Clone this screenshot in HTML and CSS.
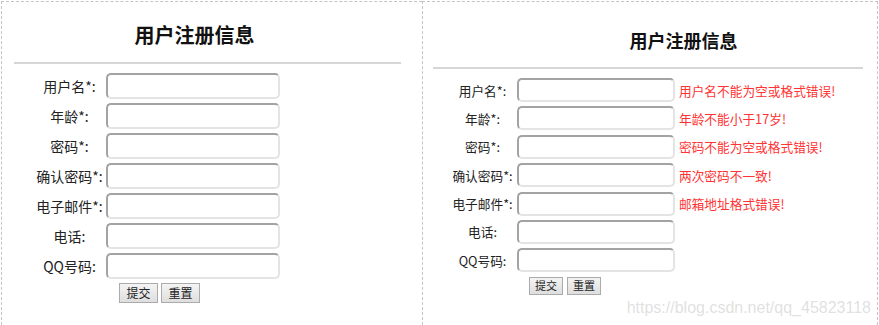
FILE: index.html
```html
<!DOCTYPE html>
<html lang="zh-CN">
<head>
<meta charset="utf-8">
<title>用户注册信息</title>
<link rel="stylesheet" href="styles.css">
</head>
<body>
<div class="wrap">
  <section class="panel panel-left">
    <h2 class="title">用户注册信息</h2>
    <hr class="rule">
    <form class="form">
      <label class="lbl">用户名*:</label><input class="field" type="text">
      <label class="lbl">年龄*:</label><input class="field" type="text">
      <label class="lbl">密码*:</label><input class="field" type="password">
      <label class="lbl">确认密码*:</label><input class="field" type="password">
      <label class="lbl">电子邮件*:</label><input class="field" type="text">
      <label class="lbl">电话:</label><input class="field" type="text">
      <label class="lbl">QQ号码:</label><input class="field" type="text">
      <div class="btns"><button type="button" class="btn">提交</button><button type="button" class="btn">重置</button></div>
    </form>
  </section>
  <section class="panel panel-right">
    <h2 class="title">用户注册信息</h2>
    <hr class="rule">
    <form class="form">
      <label class="lbl">用户名*:</label><input class="field" type="text"><span class="err">用户名不能为空或格式错误!</span>
      <label class="lbl">年龄*:</label><input class="field" type="text"><span class="err">年龄不能小于17岁!</span>
      <label class="lbl">密码*:</label><input class="field" type="password"><span class="err">密码不能为空或格式错误!</span>
      <label class="lbl">确认密码*:</label><input class="field" type="password"><span class="err">两次密码不一致!</span>
      <label class="lbl">电子邮件*:</label><input class="field" type="text"><span class="err">邮箱地址格式错误!</span>
      <label class="lbl">电话:</label><input class="field" type="text"><span class="err"></span>
      <label class="lbl">QQ号码:</label><input class="field" type="text"><span class="err"></span>
      <div class="btns"><button type="button" class="btn">提交</button><button type="button" class="btn">重置</button></div>
    </form>
    <div class="watermark">https://blog.csdn.net/qq_45823118</div>
  </section>
</div>
</body>
</html>
```

FILE: styles.css
```css
html, body {
  margin: 0;
  padding: 0;
  background: #fff;
}
body {
  font-family: "Noto Sans CJK SC", "Noto Sans", sans-serif;
  color: #222;
  overflow: hidden;
}
.wrap {
  display: flex;
  padding: 1px 0 0 1px;
  height: 324px;
}
.panel {
  box-sizing: border-box;
  height: 324px;
  border-top: 1px dashed #c4c4c4;
  border-left: 1px dashed #c4c4c4;
  display: flex;
  flex-direction: column;
}
.panel-left {
  width: 421px;
}
.panel-right {
  width: 456px;
  border-right: 1px dashed #c4c4c4;
  position: relative;
}
.title {
  margin: 0;
  font-weight: bold;
  text-align: center;
  color: #111;
}
.rule {
  border: 0;
  height: 2px;
  background: #d6d6d6;
  margin: 0;
}
.form {
  display: grid;
  align-items: center;
  margin: 0;
}
.lbl {
  text-align: center;
  white-space: nowrap;
}
.field {
  box-sizing: border-box;
  margin: 0;
  padding: 0 4px;
  background: #fff;
  border: 2px solid;
  border-color: #a3a3a3 #e4e4e4 #e4e4e4 #a3a3a3;
  border-radius: 5px;
  outline: none;
}
.btns {
  grid-column: 1 / 3;
  display: flex;
}
.btn {
  box-sizing: border-box;
  margin: 0;
  padding: 0;
  font-family: "Noto Sans CJK SC", sans-serif;
  color: #222;
  background: linear-gradient(#f4f4f4, #dedede);
  border: 1px solid #ababab;
  border-radius: 0;
  line-height: 1;
}
.err {
  color: #ff3333;
  white-space: nowrap;
}

/* left panel */
.panel-left .title {
  font-size: 20px;
  line-height: 24px;
  margin-top: 21px;
  padding-right: 35px;
}
.panel-left .rule {
  margin: 15px 21px 0 12px;
}
.panel-left .form {
  margin: 9px 0 0 32px;
  grid-template-columns: 71px 174px;
  column-gap: 1px;
  row-gap: 4px;
  font-size: 14px;
}
.panel-left .field {
  height: 26px;
}
.panel-left .btns {
  gap: 3px;
  padding-left: 85px;
}
.panel-left .btn {
  width: 39px;
  height: 20px;
  font-size: 12px;
}

/* right panel (slightly smaller scale) */
.panel-right .title {
  font-size: 18px;
  line-height: 22px;
  margin-top: 27px;
  padding-left: 67px;
}
.panel-right .rule {
  margin: 16px 14px 0 10px;
}
.panel-right .form {
  margin: 9px 0 0 26px;
  grid-template-columns: 67px 158px auto;
  column-gap: 1px;
  row-gap: 4.4px;
  font-size: 12.7px;
}
.panel-right .err {
  padding-left: 3px;
}
.panel-right .field {
  height: 24px;
}
.panel-right .btns {
  grid-column: 1 / 4;
  gap: 4px;
  padding-left: 80px;
}
.panel-right .btn {
  width: 34px;
  height: 18px;
  font-size: 11px;
}
.watermark {
  position: absolute;
  right: 6px;
  bottom: 8px;
  font-family: "Liberation Sans", Arial, sans-serif;
  font-size: 16px;
  color: rgba(175, 175, 175, 0.4);
  white-space: nowrap;
}
```
